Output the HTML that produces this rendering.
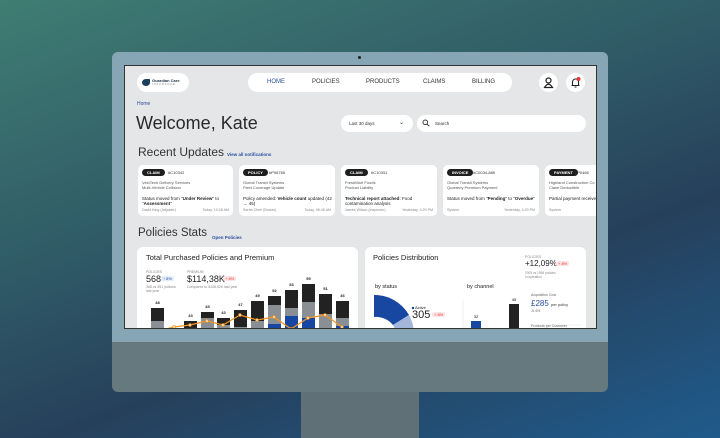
<!DOCTYPE html>
<html><head><style>
*{margin:0;padding:0;box-sizing:border-box}
body{width:720px;height:438px;overflow:hidden;position:relative;font-family:"Liberation Sans",sans-serif;
background:linear-gradient(160deg,#3f7d73 0%,#2f5a66 40%,#26405b 65%,#1f5b8c 100%)}
.a{position:absolute}
.t{position:absolute;white-space:nowrap}
.card{position:absolute;background:#fff;border-radius:5px;top:164px;height:51px}
.tag{position:absolute;left:4px;top:4px;background:#1e1e1e;color:#fff;font-size:4px;font-weight:bold;border-radius:4px;padding:1px 5px}
.cid{position:absolute;left:30px;top:5px;font-size:4px;color:#333}
.s{font-size:4px;color:#555;position:absolute;left:4px}
.m{font-size:4.5px;color:#222;position:absolute;left:4px;top:31px;line-height:5px;width:90px}
.f{position:absolute;bottom:4px;font-size:3.6px;color:#888}
</style></head><body>
<div class="a" style="left:301px;top:390px;width:118px;height:48px;background:#5f7177"></div>
<div class="a" style="left:112px;top:52px;width:496px;height:340px;background:#66797f;border-radius:6px"></div>
<div class="a" style="left:112px;top:52px;width:496px;height:290px;background:#86a6b6;border-radius:6px 6px 0 0"></div>
<div class="a" style="left:358px;top:56px;width:3px;height:3px;border-radius:50%;background:#222"></div>
<div class="a" style="left:124px;top:65px;width:473px;height:264px;background:#e4e6e8;overflow:hidden;border:1px solid #333">
<div class="a" style="left:-124px;top:-65px;width:720px;height:438px">
 <div class="a" style="left:136px;top:72px;width:52px;height:19px;background:#fff;border-radius:10px"></div>
 <div class="a" style="left:141px;top:78px;width:8px;height:7px;background:#1a3e5c;border-radius:50% 10% 50% 50%"></div>
 <div class="t" style="left:151px;top:77px;font-size:4px;font-weight:bold;color:#1a2b3c">Guardian Care</div>
 <div class="t" style="left:151px;top:82px;font-size:2.5px;color:#777;letter-spacing:1px">INSURANCE</div>
 <div class="a" style="left:247px;top:72px;width:264px;height:19px;background:#fff;border-radius:10px"></div>
 <div class="t" style="left:266px;top:78px;font-size:6px;color:#2a4fa0">HOME</div>
 <div class="t" style="left:311px;top:78px;font-size:6px;color:#333">POLICIES</div>
 <div class="t" style="left:365px;top:78px;font-size:6px;color:#333">PRODUCTS</div>
 <div class="t" style="left:422px;top:78px;font-size:6px;color:#333">CLAIMS</div>
 <div class="t" style="left:471px;top:78px;font-size:6px;color:#333">BILLING</div>
 <div class="a" style="left:538px;top:72px;width:19px;height:19px;background:#fff;border-radius:50%"></div>
 <svg class="a" style="left:541px;top:75px" width="13" height="13" viewBox="0 0 13 13"><circle cx="6.5" cy="4.5" r="2.5" fill="none" stroke="#222" stroke-width="1.2"/><path d="M2.5 11.5 Q6.5 5 10.5 11.5 Z" fill="none" stroke="#222" stroke-width="1.2"/></svg>
 <div class="a" style="left:565px;top:72px;width:19px;height:19px;background:#fff;border-radius:50%"></div>
 <svg class="a" style="left:568px;top:75px" width="13" height="13" viewBox="0 0 13 13"><path d="M3.5 9.5 V6 a3 3 0 0 1 6 0 V9.5 H2.5 H10.5 M5.5 11 h2" fill="none" stroke="#222" stroke-width="1.1"/><circle cx="9.5" cy="3" r="2" fill="#e53935"/></svg>
 <div class="t" style="left:136px;top:100px;font-size:5px;color:#2a4fa0">Home</div>
 <div class="t" style="left:135px;top:112px;font-size:18px;color:#2a2a2a">Welcome, Kate</div>
 <div class="a" style="left:340px;top:114px;width:72px;height:17px;background:#fff;border-radius:9px"></div>
 <div class="t" style="left:348px;top:120px;font-size:4.5px;color:#333">Last 30 days</div>
 <div class="t" style="left:398px;top:118px;font-size:6px;color:#333">&#8964;</div>
 <div class="a" style="left:416px;top:114px;width:169px;height:17px;background:#fff;border-radius:9px"></div>
 <svg class="a" style="left:421px;top:118px" width="8" height="8"><circle cx="3.3" cy="3.3" r="2.3" fill="none" stroke="#333" stroke-width="0.9"/><path d="M5 5 L7.3 7.3" stroke="#333" stroke-width="0.9"/></svg>
 <div class="t" style="left:434px;top:120px;font-size:4.5px;color:#333">Search</div>
 <div class="t" style="left:137px;top:144px;font-size:12px;color:#333">Recent Updates</div>
 <div class="t" style="left:226px;top:151px;font-size:4.5px;color:#2a4fa0;font-weight:bold">View all notifications</div>
 <div class="card" style="left:137px;width:95px"><div class="tag">CLAIM</div><div class="cid">#C10342</div><div class="s" style="top:15px">VeloTech Delivery Services</div><div class="s" style="top:20px">Multi-Vehicle Collision</div><div class="m">Status moved from "<b>Under Review</b>" to "<b>Assessment</b>"</div><div class="f" style="left:4px">David King (Adjuster)</div><div class="f" style="right:4px">Today, 10:28 AM</div></div>
 <div class="card" style="left:238px;width:96px"><div class="tag">POLICY</div><div class="cid">#P98765</div><div class="s" style="top:15px">Global Transit Systems</div><div class="s" style="top:20px">Fleet Coverage Update</div><div class="m">Policy amended: <b>Vehicle count</b> updated (42 → 45)</div><div class="f" style="left:4px">Sarah Chen (Broker)</div><div class="f" style="right:4px">Today, 08:45 AM</div></div>
 <div class="card" style="left:340px;width:96px"><div class="tag">CLAIM</div><div class="cid">#C10331</div><div class="s" style="top:15px">FreshMart Foods</div><div class="s" style="top:20px">Product Liability</div><div class="m"><b>Technical report attached</b>: Food contamination analysis</div><div class="f" style="left:4px">James Wilson (Inspector)</div><div class="f" style="right:4px">Yesterday, 4:20 PM</div></div>
 <div class="card" style="left:442px;width:96px"><div class="tag">INVOICE</div><div class="cid">#C0034-889</div><div class="s" style="top:15px">Global Transit Systems</div><div class="s" style="top:20px">Quarterly Premium Payment</div><div class="m">Status moved from "<b>Pending</b>" to "<b>Overdue</b>"</div><div class="f" style="left:4px">System</div><div class="f" style="right:4px">Yesterday, 4:20 PM</div></div>
 <div class="card" style="left:544px;width:96px"><div class="tag">PAYMENT</div><div class="cid">#P0466</div><div class="s" style="top:15px">Highland Construction Co</div><div class="s" style="top:20px">Claim Deductible</div><div class="m">Partial payment received <b>$3,800.00</b></div><div class="f" style="left:4px">System</div></div>
 <div class="t" style="left:137px;top:226px;font-size:11.5px;color:#333">Policies Stats</div>
 <div class="t" style="left:211px;top:234px;font-size:4.5px;color:#2a4fa0;font-weight:bold">Open Policies</div>
 <div class="a" style="left:136px;top:246px;width:221px;height:100px;background:#fff;border-radius:6px"></div>
 <div class="t" style="left:145px;top:252px;font-size:7.5px;color:#222">Total Purchased Policies and Premium</div>
 <div class="t" style="left:145px;top:269px;font-size:3.5px;color:#888">POLICIES</div>
 <div class="t" style="left:145px;top:273px;font-size:9px;color:#222">568</div>
 <div class="t" style="left:160px;top:275px;font-size:4px;color:#2a4fa0;background:#e3eefa;padding:0 2px;border-radius:2px">↑ 8%</div>
 <div class="t" style="left:145px;top:284px;font-size:3.5px;color:#888;line-height:4px">368 vs 351 policies<br>last year</div>
 <div class="t" style="left:186px;top:269px;font-size:3.5px;color:#888">PREMIUM</div>
 <div class="t" style="left:186px;top:273px;font-size:9px;color:#222">$114,38K</div>
 <div class="t" style="left:222px;top:275px;font-size:4px;color:#e53935;background:#fde4e4;padding:0 2px;border-radius:2px">+ 8%</div>
 <div class="t" style="left:186px;top:284px;font-size:3.5px;color:#888">Compared to $108,52K last year</div>
 <svg class="a" style="left:136px;top:246px" width="221" height="100">
  <g font-family="Liberation Sans" font-size="4" font-weight="bold" text-anchor="middle" fill="#222">
  <text x="20.5" y="57">48</text><rect x="14" y="61" width="13" height="13" fill="#222"/><rect x="14" y="74" width="13" height="30" fill="#8a8f95"/>
  <text x="53.5" y="70">43</text><rect x="47" y="74" width="13" height="30" fill="#222"/>
  <text x="70.5" y="61">45</text><rect x="64" y="65" width="13" height="6" fill="#222"/><rect x="64" y="71" width="13" height="30" fill="#8a8f95"/>
  <text x="86.5" y="67">43</text><rect x="80" y="71" width="13" height="7" fill="#222"/><rect x="80" y="78" width="13" height="4" fill="#8a8f95"/><rect x="80" y="82" width="13" height="20" fill="#222"/>
  <text x="103.5" y="59">47</text><rect x="97" y="63" width="13" height="17" fill="#222"/><rect x="97" y="80" width="13" height="20" fill="#8a8f95"/>
  <text x="120.5" y="50">49</text><rect x="114" y="54" width="13" height="20" fill="#222"/><rect x="114" y="74" width="13" height="30" fill="#8a8f95"/>
  <text x="137.5" y="45">52</text><rect x="131" y="49" width="13" height="9" fill="#222"/><rect x="131" y="58" width="13" height="19" fill="#8a8f95"/><rect x="131" y="77" width="13" height="30" fill="#1747a0"/>
  <text x="154.5" y="39">53</text><rect x="148" y="43" width="13" height="18" fill="#222"/><rect x="148" y="61" width="13" height="8" fill="#8a8f95"/><rect x="148" y="69" width="13" height="30" fill="#1747a0"/>
  <text x="171.5" y="33">59</text><rect x="165" y="37" width="13" height="18" fill="#222"/><rect x="165" y="55" width="13" height="16" fill="#8a8f95"/><rect x="165" y="71" width="13" height="30" fill="#1747a0"/>
  <text x="188.5" y="43">51</text><rect x="182" y="47" width="13" height="20" fill="#222"/><rect x="182" y="67" width="13" height="30" fill="#8a8f95"/>
  <text x="205.5" y="50">46</text><rect x="199" y="54" width="13" height="17" fill="#222"/><rect x="199" y="71" width="13" height="8" fill="#8a8f95"/><rect x="199" y="79" width="13" height="30" fill="#1747a0"/>
  </g>
  <polyline points="20,84 37,80 53,78 70,74 86,78 103,68 120,73 137,70 154,82 171,71 188,68 205,80" fill="none" stroke="#f5941d" stroke-width="1.2"/>
  <g fill="#fff" stroke="#f5941d" stroke-width="0.8"><circle cx="37" cy="80" r="1.3"/><circle cx="53" cy="78" r="1.3"/><circle cx="70" cy="74" r="1.3"/><circle cx="86" cy="78" r="1.3"/><circle cx="103" cy="68" r="1.3"/><circle cx="120" cy="73" r="1.3"/><circle cx="137" cy="70" r="1.3"/><circle cx="154" cy="82" r="1.3"/><circle cx="171" cy="71" r="1.3"/><circle cx="188" cy="68" r="1.3"/><circle cx="205" cy="80" r="1.3"/></g>
 </svg>
 <div class="a" style="left:364px;top:246px;width:221px;height:100px;background:#fff;border-radius:6px"></div>
 <div class="t" style="left:372px;top:252px;font-size:7.5px;color:#222">Policies Distribution</div>
 <div class="t" style="left:524px;top:254px;font-size:3.5px;color:#888">POLICIES</div>
 <div class="t" style="left:524px;top:258px;font-size:8px;color:#222">+12,09%</div>
 <div class="t" style="left:555px;top:260px;font-size:4px;color:#e53935;background:#fde4e4;padding:0 2px;border-radius:2px">+ 8%</div>
 <div class="t" style="left:524px;top:270px;font-size:3.2px;color:#888;line-height:4px">2005 vs 1958 policies<br>in operation</div>
 <div class="t" style="left:374px;top:283px;font-size:5.5px;color:#222">by status</div>
 <div class="t" style="left:466px;top:283px;font-size:5.5px;color:#222">by channel</div>
 <svg class="a" style="left:364px;top:246px" width="221" height="100">
  <path d="M9 48 A40 40 0 0 1 44 68 L28 78 A22 22 0 0 0 9 70 Z" fill="#1747a0"/>
  <path d="M44 68 A40 40 0 0 1 49 88 L31 88 A22 22 0 0 0 28 78 Z" fill="#a3b7dc"/>
  <line x1="98" y1="52" x2="98" y2="100" stroke="#e5e5e5" stroke-width="0.6"/>
  <rect x="106" y="74" width="10" height="30" fill="#1747a0"/><text x="111" y="71" font-size="4" text-anchor="middle" font-family="Liberation Sans">32</text>
  <rect x="144" y="57" width="10" height="40" fill="#222"/><text x="149" y="54" font-size="4" text-anchor="middle" font-family="Liberation Sans">45</text>
  <circle cx="48" cy="61" r="1.2" fill="#1747a0"/><circle cx="57" cy="87" r="1.2" fill="#a3b7dc"/>
  <line x1="170" y1="78" x2="216" y2="78" stroke="#e5e5e5" stroke-width="0.6"/>
 </svg>
 <div class="t" style="left:414px;top:304px;font-size:4px;color:#222">Active</div>
 <div class="t" style="left:411px;top:308px;font-size:11px;color:#222">305</div>
 <div class="t" style="left:431px;top:311px;font-size:4px;color:#e53935;background:#fde4e4;padding:0 2px;border-radius:2px">+ 8%</div>
 <div class="t" style="left:423px;top:329px;font-size:4px;color:#222">Pending</div>
 <div class="t" style="left:530px;top:292px;font-size:3.5px;color:#666">Acquisition Cost</div>
 <div class="t" style="left:530px;top:298px;font-size:8px;color:#2a4fa0">£285 <span style="font-size:4px;color:#333">per policy</span></div>
 <div class="t" style="left:530px;top:308px;font-size:3.5px;color:#666">-5.4%</div>
 <div class="t" style="left:530px;top:323px;font-size:3.5px;color:#666">Products per Customer</div>
</div></div>
</body></html>
